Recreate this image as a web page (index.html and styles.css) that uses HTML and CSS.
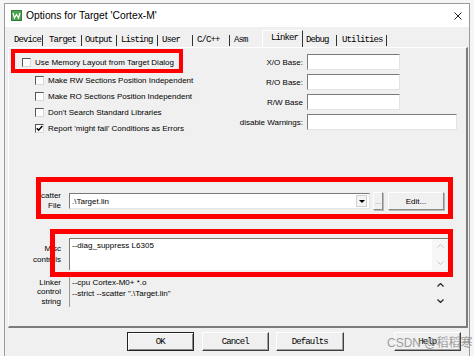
FILE: index.html
```html
<!DOCTYPE html>
<html lang="en">
<head>
  <meta charset="UTF-8"/>
  <title>Options for Target 'Cortex-M'</title>
  <link rel="stylesheet" href="styles.css">
</head>
<body>

  <div class="window">

    <!-- Title bar -->
    <div class="titlebar">
      <svg class="app-icon" width="11" height="11" viewBox="0 0 11 11">
        <rect x="0" y="0" width="11" height="11" fill="#2f7d3a"/>
        <rect x="1" y="1" width="9" height="9" fill="#4fa34f"/>
        <path d="M2 3 L3.5 8 L5.5 4.5 L7.5 8 L9 3" fill="none" stroke="#fff" stroke-width="1.2"/>
      </svg>
      <span class="title">Options for Target 'Cortex-M'</span>
      <svg class="close" width="8" height="8" viewBox="0 0 8 8">
        <path d="M0.5 0.5 L7.5 7.5 M7.5 0.5 L0.5 7.5" stroke="#222" stroke-width="1"/>
      </svg>
    </div>

    <!-- Tabs -->
    <div class="tabs">
      <span class="tab tab-device">Device</span>
      <span class="tab tab-target">Target</span>
      <span class="tab tab-output">Output</span>
      <span class="tab tab-listing">Listing</span>
      <span class="tab tab-user">User</span>
      <span class="tab tab-cpp">C/C++</span>
      <span class="tab tab-asm">Asm</span>
      <span class="tab tab-linker active">Linker</span>
      <span class="tab tab-debug">Debug</span>
      <span class="tab tab-utilities">Utilities</span>
    </div>

    <!-- Linker page -->
    <div class="panel">
      <div class="top">
        <div class="checks">
          <label class="check first"><span class="box"></span>Use Memory Layout from Target Dialog</label>
          <label class="check sub"><span class="box"></span>Make RW Sections Position Independent</label>
          <label class="check sub"><span class="box"></span>Make RO Sections Position Independent</label>
          <label class="check sub"><span class="box"></span>Don't Search Standard Libraries</label>
          <label class="check sub">
            <span class="box">
              <svg width="7" height="7" viewBox="0 0 7 7"><path d="M0.8 3.2 L2.6 5.2 L6.3 0.9" fill="none" stroke="#000" stroke-width="1.5"/></svg>
            </span>Report 'might fail' Conditions as Errors
          </label>
        </div>
        <div class="fields">
          <div class="field"><span class="field-label">X/O Base:</span><span class="input"></span></div>
          <div class="field"><span class="field-label">R/O Base:</span><span class="input"></span></div>
          <div class="field"><span class="field-label">R/W Base</span><span class="input"></span></div>
          <div class="field"><span class="field-label">disable Warnings:</span><span class="input wide"></span></div>
        </div>
      </div>

      <div class="row scatter">
        <span class="row-label">Scatter<br>File</span>
        <div class="combo">
          <span class="combo-text">.\Target.lin</span>
          <span class="combo-btn"><span class="arrow"></span></span>
        </div>
        <span class="btn btn-dots">...</span>
        <span class="btn btn-edit">Edit...</span>
      </div>

      <div class="row misc">
        <span class="row-label">Misc<br>controls</span>
        <div class="textbox">
          <div class="textbox-text">--diag_suppress L6305</div>
          <div class="scroll light">
            <svg width="7" height="4" viewBox="0 0 7 4"><path d="M0.5 3.5 L3.5 0.5 L6.5 3.5" fill="none" stroke="currentColor"/></svg>
            <svg width="7" height="4" viewBox="0 0 7 4"><path d="M0.5 0.5 L3.5 3.5 L6.5 0.5" fill="none" stroke="currentColor"/></svg>
          </div>
        </div>
      </div>

      <div class="row linker">
        <span class="row-label">Linker<br>control<br>string</span>
        <div class="textbox readonly">
          <div class="textbox-text">--cpu Cortex-M0+ *.o<br>--strict --scatter ".\Target.lin"</div>
          <div class="scroll">
            <svg width="7" height="4" viewBox="0 0 7 4"><path d="M0.5 3.5 L3.5 0.5 L6.5 3.5" fill="none" stroke="currentColor" stroke-width="1.2"/></svg>
            <svg width="7" height="4" viewBox="0 0 7 4"><path d="M0.5 0.5 L3.5 3.5 L6.5 0.5" fill="none" stroke="currentColor" stroke-width="1.2"/></svg>
          </div>
        </div>
      </div>
    </div>

    <!-- Dialog buttons -->
    <div class="buttons">
      <span class="btn dlg default">OK</span>
      <span class="btn dlg">Cancel</span>
      <span class="btn dlg">Defaults</span>
      <span class="btn dlg help">Help</span>
    </div>

    <!-- Red annotation frames -->
    <div class="mark mark-memory"></div>
    <div class="mark mark-scatter"></div>
    <div class="mark mark-misc"></div>

    <div class="watermark">CSDN @稻稻寒</div>
  </div>

</body>
</html>
```

FILE: styles.css
```css
body {
  margin: 0;
  background: #f4f5f4;
  overflow: hidden;
  font-family: 'Liberation Sans', Arial, sans-serif;
  font-size: 8px;
  color: #000;
}

.window {
  position: relative;
  margin: 3px 0 0 4px;
  width: 466px;
  height: 360px;
  box-sizing: border-box;
  border: 1px solid #9a9a9a;
  border-bottom: none;
  background: #f0f0f0;
}

/* Title bar */
.titlebar {
  height: 23px;
  background: #fff;
  display: flex;
  align-items: center;
  padding-left: 6px;
}

.app-icon {
  flex: none;
}

.title {
  margin-left: 4px;
  font-size: 10.3px;
  flex: 1;
}

.close {
  margin-right: 7px;
}

/* Tabs */
.tabs {
  display: flex;
  align-items: flex-end;
  height: 16px;
  margin-top: 4px;
  padding-left: 5px;
  font-family: 'Liberation Mono', 'Courier New', monospace;
  font-size: 9px;
  letter-spacing: -0.9px;
}

.tab {
  box-sizing: border-box;
  height: 11px;
  line-height: 11px;
  margin-bottom: 1px;
  padding-left: 4px;
  border-right: 1px solid #333;
  white-space: nowrap;
}

.tab-device { width: 33px; }
.tab-target { width: 39px; padding-left: 6px; }
.tab-output { width: 35px; padding-left: 3px; }
.tab-listing { width: 41px; }
.tab-user { width: 35px; }
.tab-cpp { width: 37px; }
.tab-asm { width: 32px; border-right: none; }
.tab-debug { width: 34px; padding-left: 3px; }
.tab-utilities { width: 50px; padding-left: 5px; }

.tab.active {
  width: 41px;
  height: 17px;
  line-height: 14px;
  margin-bottom: 0;
  padding-left: 8px;
  border-top: 1px solid #fff;
  border-left: 1px solid #fff;
}

/* Page */
.panel {
  box-sizing: border-box;
  margin-left: 3px;
  width: 460px;
  height: 281px;
  border-top: 1px solid #fff;
  border-left: 1px solid #fff;
  border-right: 2px solid #7c7c7c;
  border-bottom: 2px solid #7c7c7c;
}

.top {
  display: flex;
}

.checks {
  width: 224px;
  padding-top: 6px;
}

.check {
  display: flex;
  align-items: center;
  height: 16px;
  white-space: nowrap;
}

.check.first {
  padding-left: 13px;
  margin-bottom: 2px;
}

.check.sub {
  padding-left: 26px;
}

.box {
  box-sizing: border-box;
  width: 9px;
  height: 9px;
  margin-right: 4px;
  background: #fff;
  border-top: 1px solid #555;
  border-left: 1px solid #555;
  border-right: 1px solid #d8d8d8;
  border-bottom: 1px solid #d8d8d8;
  display: flex;
  align-items: center;
  justify-content: center;
}

.fields {
  padding-top: 6px;
  display: flex;
  flex-direction: column;
  gap: 4px;
}

.field {
  display: flex;
  align-items: center;
  gap: 4px;
  height: 16px;
}

.field-label {
  width: 70px;
  text-align: right;
  white-space: nowrap;
}

.input {
  box-sizing: border-box;
  width: 93px;
  height: 16px;
  background: #fff;
  border-top: 1px solid #7a7a7a;
  border-left: 1px solid #7a7a7a;
  border-right: 1px solid #e4e4e4;
  border-bottom: 1px solid #e4e4e4;
}

.input.wide {
  width: 150px;
}

/* Rows with a label on the left */
.row {
  display: flex;
  align-items: center;
}

.row-label {
  width: 52px;
  margin-right: 8px;
  text-align: right;
  line-height: 10px;
}

.scatter {
  margin-top: 56px;
  height: 18px;
}

.combo {
  box-sizing: border-box;
  width: 301px;
  height: 16px;
  display: flex;
  align-items: center;
  background: #fff;
  border-top: 1px solid #7a7a7a;
  border-left: 1px solid #7a7a7a;
  border-right: 1px solid #e4e4e4;
  border-bottom: 1px solid #e4e4e4;
}

.combo-text {
  flex: 1;
  padding-left: 2px;
}

.combo-btn {
  box-sizing: border-box;
  width: 11px;
  height: 12px;
  margin-right: 2px;
  border: 1px solid #cfcfcf;
  background: #f4f4f4;
  display: flex;
  align-items: center;
  justify-content: center;
}

.arrow {
  width: 0;
  height: 0;
  border-left: 3px solid transparent;
  border-right: 3px solid transparent;
  border-top: 3px solid #000;
}

.btn {
  box-sizing: border-box;
  height: 18px;
  display: flex;
  align-items: center;
  justify-content: center;
  background: #f0f0f0;
  border-top: 1px solid #fff;
  border-left: 1px solid #fff;
  border-right: 1px solid #8a8a8a;
  border-bottom: 1px solid #8a8a8a;
  box-shadow: 1px 1px 0 #b8b8b8;
}

.btn-dots {
  width: 10px;
  margin-left: 3px;
  color: #888;
  font-size: 7px;
}

.btn-edit {
  width: 56px;
  margin-left: 5px;
}

.misc {
  margin-top: 28px;
  height: 32px;
}

.misc .row-label {
  line-height: 11px;
}

.textbox {
  box-sizing: border-box;
  width: 379px;
  height: 32px;
  display: flex;
  background: #fff;
  border-top: 1px solid #7a7a7a;
  border-left: 1px solid #7a7a7a;
  line-height: 11px;
}

.textbox-text {
  flex: 1;
  padding: 1px 0 0 2px;
  white-space: nowrap;
}

.scroll {
  width: 16px;
  display: flex;
  flex-direction: column;
  align-items: center;
  justify-content: space-between;
  padding: 5px 0 5px;
  color: #222;
}

.scroll.light {
  color: #c4c4c4;
  background: #f7f7f7;
}

.linker {
  margin-top: 7px;
  height: 30px;
}

.linker .row-label {
  line-height: 9.5px;
}

.textbox.readonly {
  height: 30px;
  background: #f0f0f0;
  border-top: none;
  border-left: 1px solid #9a9a9a;
}

.textbox.readonly .textbox-text {
  padding-top: 0;
}

.textbox.readonly .scroll {
  padding: 6px 0 4px;
}

/* Dialog buttons */
.buttons {
  display: flex;
  margin: 4px 0 0 122px;
}

.btn.dlg {
  width: 68px;
  height: 19px;
  margin-right: 8px;
  font-family: 'Liberation Mono', 'Courier New', monospace;
  font-size: 9px;
  letter-spacing: -0.9px;
  border-right: 1px solid #404040;
  border-bottom: 1px solid #404040;
  box-shadow: inset -1px -1px 0 #a0a0a0;
}

.btn.dlg:nth-child(2),
.btn.dlg:nth-child(3) {
  width: 69px;
  margin-right: 7px;
}

.btn.dlg.default {
  border: 1px solid #222;
  box-shadow: inset 1px 1px 0 #fff, inset -1px -1px 0 #8a8a8a;
}

.btn.dlg.help {
  width: 69px;
  margin-left: 43px;
}

/* Red annotation frames drawn over the dialog */
.mark {
  position: absolute;
  box-sizing: border-box;
  border: 5px solid #f00;
}

.mark-memory {
  left: 6px;
  top: 45px;
  width: 172px;
  height: 24px;
  border-width: 4px;
}

.mark-scatter {
  left: 31px;
  top: 173px;
  width: 417px;
  height: 42px;
}

.mark-misc {
  left: 45px;
  top: 225px;
  width: 403px;
  height: 48px;
}

.watermark {
  position: absolute;
  left: 382px;
  top: 331px;
  font-family: 'Liberation Sans', 'Noto Sans CJK SC', sans-serif;
  font-size: 12px;
  line-height: 16px;
  color: rgba(140, 140, 140, 0.85);
  white-space: nowrap;
}
```
